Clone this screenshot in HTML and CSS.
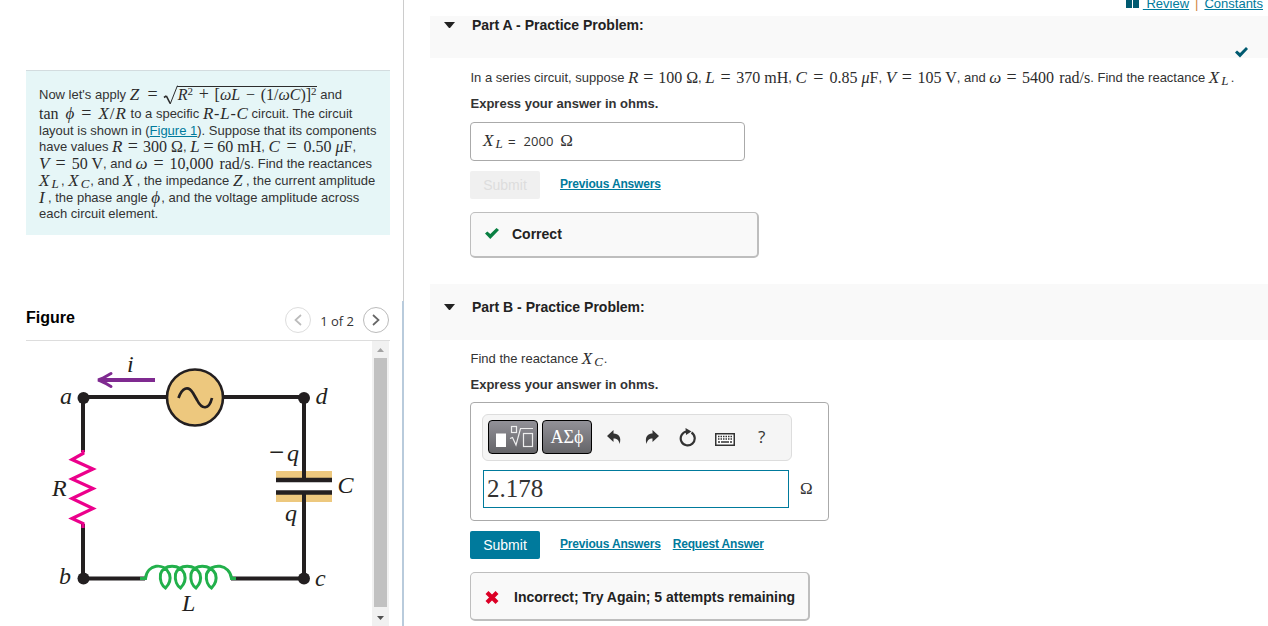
FILE: index.html
```html
<!DOCTYPE html>
<html lang="en">
<head>
<meta charset="utf-8">
<title>Practice Problem</title>
<link rel="stylesheet" href="styles.css">
</head>
<body>
<div class="app">
  <aside class="left">
    <div class="intro">
      <div class="ln first">Now let's apply <span class="m w-z"><i>Z</i><span class="eq">=</span></span><svg class="radical" viewBox="0 0 15 20" width="15" height="20"><path d="M1 12.5L3.3 10.8M3.3 10.8L7.2 18.5" stroke-width="1.6"/><path d="M7.2 19L14.3 1H15" stroke-width="1"/></svg><span class="m root w-root"><span><i>R</i><sup>2</sup></span><span class="eq">+</span><span>[<i>ωL</i></span><span>−</span><span>(1/<i>ωC</i>)]<sup>2</sup></span></span> and</div>
      <div class="ln"><span class="m w-tan"><span>tan</span><i>ϕ</i><span class="eq">=</span><span class="big"><i>X</i>/<i>R</i></span></span> to a specific <span class="m w-rlc"><i>R</i>-<i>L</i>-<i>C</i></span> circuit. The circuit</div>
      <div class="ln short">layout is shown in (<a href="#">Figure 1</a>). Suppose that its components</div>
      <div class="ln">have values <span class="m w-r"><i>R</i><span class="eq">=</span><span>300 Ω</span></span>, <span class="m w-l"><i>L</i><span class="eq">=</span><span>60 mH</span></span>, <span class="m w-c"><i>C</i><span class="eq">=</span><span>0.50 <i>μ</i>F</span></span>,</div>
      <div class="ln"><span class="m w-v"><i>V</i><span class="eq">=</span><span>50 V</span></span>, and <span class="m w-w"><i>ω</i><span class="eq">=</span><span>10,000</span><span>rad/s</span></span>. Find the reactances</div>
      <div class="ln"><span class="m w-x"><i>X</i><sub>L</sub></span>, <span class="m w-x"><i>X</i><sub>C</sub></span>, and <span class="m w-xs"><i>X</i></span>, the impedance <span class="m w-zs"><i>Z</i></span>, the current amplitude</div>
      <div class="ln short"><span class="m w-i"><i>I</i></span>, the phase angle <span class="m w-phi"><i>ϕ</i></span>, and the voltage amplitude across</div>
      <div class="ln">each circuit element.</div>
    </div>
    <div class="figure">
      <div class="fig-head">
        <h2>Figure</h2>
        <div class="pager">
          <span class="circle off"><svg width="10" height="14" viewBox="0 0 10 14"><path d="M8 2L2.5 7L8 12"/></svg></span>
          <span class="count">1 of 2</span>
          <span class="circle"><svg width="10" height="14" viewBox="0 0 10 14"><path d="M2 2L7.5 7L2 12"/></svg></span>
        </div>
      </div>
      <div class="fig-body">
        <svg class="circuit" viewBox="26 341 346 285" width="346" height="285">
          <g class="wire">
            <path d="M83 452V397H168M222 397H304V480M304 493V578.5H231M145 578.5H83V524"/>
          </g>
          <g class="plate"><rect x="276" y="471" width="56" height="8"/><rect x="276" y="494" width="56" height="8"/></g>
          <path class="wire" d="M304 468V480M304 492V504"/>
          <path class="bars" d="M276 480H332M276 492.5H332"/>
          <circle class="source" cx="195" cy="397.5" r="28"/>
          <path class="sine" d="M178.5 398C182 388 188 385 193 393L197 400C202 410 209 410 212 398"/>
          <g class="node"><circle cx="83.5" cy="398" r="6"/><circle cx="304" cy="398" r="6"/><circle cx="83.5" cy="578.5" r="6"/><circle cx="304" cy="578.5" r="6"/></g>
          <path class="resistor" d="M83 450V453.5L72 459.5L93 469L72 479L93 488.5L72 498.5L93 508.5L72 518.5L83 523.5V528"/>
          <path class="arrow" d="M155 380H99"/><path class="arrow head" d="M111 373.500C106 376.500 102 379 98 380C102 381 106 383.500 111 386.500"/>
          <path class="coil" d="M140 578.500H145.500C147 564 164 562 169.500 574C171.500 581 167.500 586 165.500 588C162.500 586 159.500 581 160.500 574C164 563.500 180 563.500 184.500 574C186.500 581 182.500 586 180.500 588C177.500 586 174.500 581 175.500 574C179 563.500 195 563.500 200 574C202 581 198 586 196 588C193 586 190 581 191 574C194 563.500 210 563.500 215.500 574C217.500 581 213.500 586 211.500 588C208.500 586 205.500 581 206.500 574C211 562 230 564 231.500 578.500H236"/>
          <g class="lab">
            <text x="127" y="372">i</text><text x="60" y="404">a</text><text x="315.500" y="404">d</text>
            <text x="52" y="496">R</text><text class="up" x="269" y="461">−</text><text x="287" y="461">q</text><text x="337.500" y="493">C</text>
            <text x="285" y="521">q</text><text x="59" y="584">b</text><text x="315" y="585.500">c</text><text x="182" y="611">L</text>
          </g>
        </svg>
        <div class="scroll">
          <svg width="17" height="17" viewBox="0 0 17 17"><path fill="#a3a3a3" d="M5 11H12L8.500 7Z"/></svg>
          <div class="thumb"></div>
          <svg width="17" height="19" viewBox="0 0 17 19"><path fill="#505050" d="M5 9H12L8.500 13Z"/></svg>
        </div>
      </div>
    </div>
  </aside>
  <div class="divider"><div class="d1"></div><div class="d2"></div></div>
  <main class="right">
    <div class="top">
      <svg width="13" height="12" viewBox="0 0 13 12"><path fill="#005a70" d="M0 0H6V12H0ZM7 0H13V12H7Z"/></svg>
      <a href="#">&nbsp;Review</a><span class="bar">|</span><a href="#">Constants</a>
    </div>
    <header class="part a"><span class="tri"></span><h3>Part A - Practice Problem:</h3>
      <svg class="done" width="13" height="11" viewBox="0 0 13 11"><path fill="#005a70" d="M0 5.500L2 3.500L5 6L11 0L13 2L5 10.500Z"/></svg></header>
    <section class="content ca">
      <div class="q">In a series circuit, suppose <span class="m n-r"><i>R</i><span class="eq">=</span><span>100 Ω</span></span>, <span class="m n-l"><i>L</i><span class="eq">=</span><span>370 mH</span></span>, <span class="m n-c"><i>C</i><span class="eq">=</span><span>0.85 <i>μ</i>F</span></span>, <span class="m n-v"><i>V</i><span class="eq">=</span><span>105 V</span></span>, and <span class="m n-w"><i>ω</i><span class="eq">=</span><span>5400</span><span>rad/s</span></span>. Find the reactance <span class="m w-x"><i>X</i><sub>L</sub></span>.</div>
      <div class="ex">Express your answer in ohms.</div>
      <div class="answer"><span class="m w-x"><i>X</i><sub>L</sub></span><span class="e2">=</span><span class="num">2000</span><span class="ohm">Ω</span></div>
      <div class="actions"><button class="btn off">Submit</button><a href="#">Previous Answers</a></div>
      <div class="result ok"><svg width="14" height="11" viewBox="0 0 14 11"><path fill="#0a8043" d="M0 5.500L2.300 3.500L5.300 6L11.500 0L14 2L5.300 11Z"/></svg>Correct</div>
    </section>
    <header class="part b"><span class="tri"></span><h3>Part B - Practice Problem:</h3></header>
    <section class="content cb">
      <div class="q">Find the reactance <span class="m w-x"><i>X</i><sub>C</sub></span>.</div>
      <div class="ex">Express your answer in ohms.</div>
      <div class="editor">
        <div class="tools">
          <span class="key"><svg width="42" height="26" viewBox="0 0 42 26"><rect x="4" y="9.500" width="10" height="13.500" fill="#fff"/><g fill="none" stroke="#eee" stroke-width="1.200"><rect x="19.500" y="2.500" width="5" height="6"/><path d="M18 14.500L20.500 13.500L24 21L28.500 4.500H41"/><rect x="31.500" y="9.500" width="9" height="13"/></g></svg></span>
          <span class="key greek">ΑΣϕ</span>
          <svg class="ic undo" width="15" height="16" viewBox="0 0 15 16"><path d="M0 6L6.500 0V3.500C11.500 3.500 15 7.500 12.500 14C12 10 10 8.500 6.500 8.500V12Z"/></svg>
          <svg class="ic redo" width="15" height="16" viewBox="0 0 15 16"><path d="M14 6L7.500 0V3.500C2.500 3.500-.500 7.500 1.500 14C2.500 10 4 8.500 7.500 8.500V12Z"/></svg>
          <svg class="ic reset" width="18" height="19" viewBox="0 0 18 19"><path d="M7.500 3.500A7 7 0 1 0 12.500 4.500" fill="none" stroke="#333" stroke-width="2.200"/><path d="M6.500 0L12.500 3.500L7 7Z"/></svg>
          <svg class="ic kbd" width="20" height="13" viewBox="0 0 20 13"><rect x=".75" y=".75" width="18.500" height="11.500" fill="#fff" stroke="#333" stroke-width="1.500"/><path d="M3 3.500H17M3 6H17" stroke="#333" stroke-width="1.500" stroke-dasharray="1.500 1"/><path d="M3 9H5M6 9H14M15 9H17" stroke="#333" stroke-width="1.500"/></svg>
          <span class="help">?</span>
        </div>
        <div class="entry"><div class="field">2.178</div><span class="ohm">Ω</span></div>
      </div>
      <div class="actions"><button class="btn">Submit</button><a href="#">Previous Answers</a><a class="req" href="#">Request Answer</a></div>
      <div class="result bad"><svg width="14" height="13" viewBox="0 0 14 13"><path d="M2 1.500L12 11.500M12 1.500L2 11.500" stroke="#dc0026" stroke-width="4.200"/></svg>Incorrect; Try Again; 5 attempts remaining</div>
    </section>
  </main>
</div>
</body>
</html>
```
FILE: styles.css
```css
* { box-sizing: border-box; }
body { margin: 0; background: #fff; color: #333; font: 13px/17px "Liberation Sans", Arial, sans-serif; }
h2, h3 { margin: 0; }
a { color: #007a9c; text-decoration: underline; }
svg { display: block; flex: none; }
.app { display: flex; width: 1268px; height: 626px; overflow: hidden; }

.left { width: 402px; flex: none; padding: 70px 12px 0 26px; }
.intro { height: 165px; background: #e6f6f7; border-top: 1px solid #d3dcdf; padding: 15px 0 0 13px; }
.ln { height: 17px; line-height: 17px; white-space: nowrap; }
.ln.first { height: 19px; }
.ln.short { height: 16px; }

.m { display: inline-flex; justify-content: space-between; align-items: baseline; line-height: 0; font-family: "Liberation Serif", serif; font-size: 16px; color: #2c2c2c; white-space: nowrap; position: relative; top: 1px; }
.m > i { font-size: 17px; }
.m sub { font-size: 13px; font-style: italic; position: relative; top: 2px; vertical-align: baseline; }
.m sup { font-size: 11px; position: relative; top: -5px; vertical-align: baseline; }
.eq { font-size: 18px; }
.big { font-size: 17px; letter-spacing: 1px; }
.radical { display: inline-block; vertical-align: 2px; margin: -8px 0; fill: none; stroke: #2c2c2c; }
.root::before { content: ""; position: absolute; left: -1px; right: 0; top: -8px; height: 1px; background: #2c2c2c; }
.w-z { width: 28px; margin-right: 5px; }
.w-root { width: 139px; }
.w-tan { width: 88px; }
.w-rlc { width: 45px; }
.w-r { width: 71px; }
.w-l { width: 71px; }
.w-c { width: 84px; }
.w-v { width: 64px; }
.w-w { width: 115px; }
.w-x { width: 22px; justify-content: flex-start; gap: 2px; }
.w-xs { width: 14px; }
.w-zs { width: 13px; }
.w-i { width: 9px; }
.w-phi { width: 10px; }
.n-r { width: 70px; }
.n-l { width: 83px; }
.n-c { width: 83px; }
.n-v { width: 71px; }
.n-w { width: 101px; }

.figure { margin-top: 65px; }
.fig-head { height: 41px; display: flex; justify-content: space-between; border-bottom: 1px solid #ddd; padding: 7px 1px 0 0; }
.fig-head h2 { font-size: 16px; line-height: 22px; color: #000; }
.pager { display: flex; gap: 9px; }
.count { font: 13px/28px "Open Sans", sans-serif; white-space: nowrap; }
.circle { width: 26px; height: 26px; border: 1px solid #bbb; border-radius: 50%; display: flex; align-items: center; justify-content: center; }
.circle path { fill: none; stroke: #666; stroke-width: 1.7; }
.circle.off { border-color: #ddd; }
.circle.off path { stroke: #bbb; }
.fig-body { display: flex; height: 285px; }
.scroll { width: 17px; background: #f1f1f1; }
.thumb { height: 249px; margin: 0 2px; background: #c1c1c1; }
.wire { fill: none; stroke: #231f20; stroke-width: 4; }
.bars { stroke: #231f20; stroke-width: 4.5; }
.plate { fill: #edc87e; }
.source { fill: #edc87e; stroke: #231f20; stroke-width: 2.6; }
.sine { fill: none; stroke: #231f20; stroke-width: 2.7; }
.node { fill: #231f20; }
.resistor { fill: none; stroke: #ec008c; stroke-width: 3.2; }
.arrow { fill: none; stroke: #7f2a90; stroke-width: 4; }
.arrow.head { stroke-width: 3; stroke-linecap: round; }
.coil { fill: none; stroke: #22b04b; stroke-width: 3; }
.lab { font: italic 24px "Liberation Serif", serif; fill: #231f20; }
.up { font-style: normal; font-size: 27px; }

.divider { width: 2px; flex: none; }
.d1 { height: 301px; margin-left: 1px; background: #ccc; }
.d2 { height: 325px; background: #b9cbdc; }

.right { flex: 1; padding-left: 26px; }
.top { height: 16px; display: flex; justify-content: flex-end; padding-right: 5px; }
.top svg { margin: -4px 4px 0 0; }
.top a, .bar { margin-top: -5px; }
.bar { color: #d0843c; padding: 0 6px; }
.part { background: #f9f9f9; display: flex; padding-left: 14px; color: #222; }
.part.a { height: 42px; }
.part.b { height: 56px; padding-top: 14px; }
.part h3 { font-size: 14px; line-height: 18px; margin-left: 17px; }
.tri { border: 5.5px solid transparent; border-top: 6px solid #222; border-bottom: 0; margin-top: 6px; height: 6px; width: 11px; }
.done { margin: 31px 20px 0 auto; }
.content { padding-left: 40px; }
.ca { height: 226px; padding-top: 11px; }
.cb { padding-top: 10px; }
.q { height: 26px; white-space: nowrap; padding-left: .5px; }
.ex { height: 27px; font-weight: bold; padding-left: .5px; }
.cb .ex { height: 26px; }
.answer { width: 275px; height: 39px; border: 1px solid #aaa; border-radius: 4px; display: flex; align-items: baseline; padding: 9px 12px; }
.answer .m { top: 0; }
.e2 { margin-left: 3px; }
.num { font: 13px/17px "Open Sans", sans-serif; margin-left: 8px; }
.answer .ohm { font: 17px/17px "Liberation Serif", serif; margin-left: 7px; }
.actions { display: flex; margin-top: 10px; height: 28px; font-size: 12px; font-weight: bold; letter-spacing: -.18px; }
.actions a { margin: 5px 0 0 20px; }
.actions .req { margin-left: 12px; }
.btn { width: 70px; height: 28px; padding: 0; border: 0; border-radius: 2px; background: #007a9c; color: #fff; font: 14px "Liberation Sans", Arial, sans-serif; }
.btn.off { background: #f0f0f0; color: #ddd; }
.result { display: flex; align-items: center; margin-top: 13px; border: 1px solid #bebebe; border-right-width: 2px; border-bottom-width: 2px; border-radius: 5px; background: #f9f9f9; color: #222; font-size: 14px; font-weight: bold; padding-left: 15px; white-space: nowrap; }
.ok { width: 289px; height: 46px; padding-bottom: 1px; }
.ok svg { margin: -1px 13px 0 -1px; }
.bad { width: 340px; height: 49px; padding: 2px 0 0 14px; }
.bad svg { margin-right: 15px; }
.editor { width: 359px; height: 119px; border: 1px solid #aaa; border-radius: 4px; padding: 11px 0 0 11px; }
.tools { width: 310px; height: 47px; border: 1px solid #ddd; border-radius: 6px; background: #f5f5f5; display: flex; padding: 5px; }
.key { width: 50px; height: 34px; border: 1px solid #000; border-radius: 4px; background: linear-gradient(#929198, #646468); margin-right: 4px; display: flex; justify-content: center; align-items: center; color: #fff; }
.greek { font: 18px "Liberation Serif", serif; }
.ic { fill: #333; margin-top: 10px; }
.undo { margin-left: 11px; }
.redo { margin-left: 23px; }
.reset { margin: 8px 0 0 19px; }
.kbd { margin: 13px 0 0 18px; }
.help { font: 17px/34px "Open Sans", sans-serif; margin-left: 23px; }
.entry { display: flex; align-items: center; margin: 9px 0 0 1px; }
.field { width: 306px; height: 38px; border: 1px solid #007a9c; font: 25px/36px "Liberation Serif", serif; padding-left: 3px; }
.entry .ohm { font: 17px "Liberation Serif", serif; margin-left: 11px; }
```
